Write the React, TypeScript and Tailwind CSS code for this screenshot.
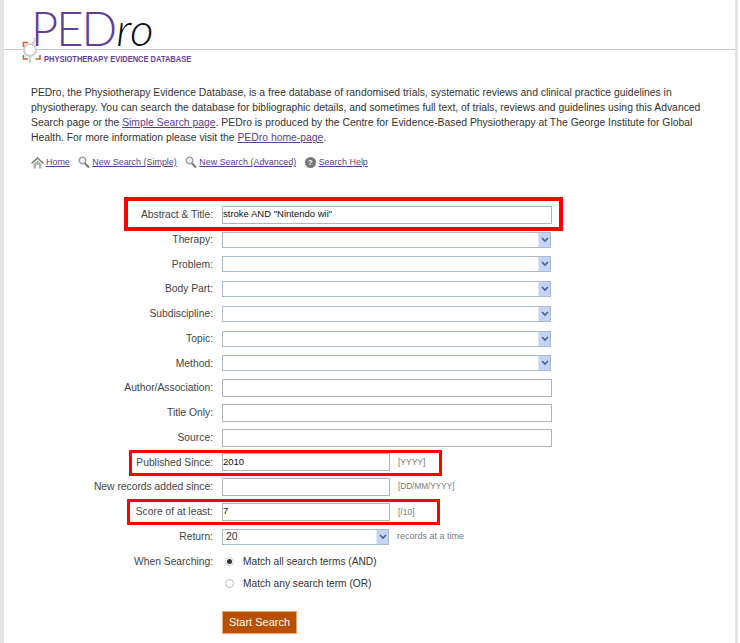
const selects = ["Therapy", "Problem", "Body Part", "Subdiscipline", "Topic", "Method"];
const texts = ["Author/Association", "Title Only", "Source"];

function Label({ children }: { children: React.ReactNode }) {
  return <div className="w-[214px] shrink-0 pr-[1px] text-right text-[10.300px] text-[#444]">{children}</div>;
}

function Chevron() {
  return (
    <span className="flex h-full w-[12px] items-center justify-center border-l border-[#dfe8f6] bg-[#c3d5f7]">
      <svg width="8" height="6" viewBox="0 0 8 6" fill="none" stroke="#4d6185" strokeWidth="1.6">
        <path d="M1 1l3 3 3-3" />
      </svg>
    </span>
  );
}

function Select({ value = "", width = "w-[329px]" }: { value?: string; width?: string }) {
  return (
    <div className={`ml-[8px] flex h-[16px] items-center justify-between border border-[#abbacb] bg-white pl-[3px] text-[#333] ${width}`}>
      <span>{value}</span>
      <Chevron />
    </div>
  );
}

function TextBox({ value = "", width = "w-[330px]" }: { value?: string; width?: string }) {
  return (
    <div className={`ml-[8px] flex h-[18px] items-center border border-[#b4b4b4] bg-white text-[9.5px] leading-none text-[#111] ${width}`}>
      <span className="-mt-[2px]">{value}</span>
    </div>
  );
}

function NavLink({ icon, children }: { icon: React.ReactNode; children: string }) {
  return (
    <span className="flex items-center gap-[2px]">
      {icon}
      <a className="text-[#5b3d8f] underline">{children}</a>
    </span>
  );
}

const Magnifier = (
  <svg width="12" height="13" viewBox="0 0 12 13" fill="none">
    <circle cx="4.500" cy="4.500" r="3.300" fill="#eef0f2" stroke="#9a9a9a" strokeWidth="1.300" />
    <path d="M7 7.500l4 4" stroke="#777" strokeWidth="2" />
  </svg>
);

export default function App() {
  return (
    <div className="relative h-[643px] w-[740px] overflow-hidden bg-white font-['Liberation_Sans',Arial,sans-serif] text-[10.5px] text-[#333]">
      {/* page frame */}
      <div className="h-full w-[738px] border-l-[4px] border-r-[3px] border-[#e4e4e4]">
        {/* logo */}
        <div className="relative h-[50px] border-b border-[#c9c9c9]">
          <div className="absolute left-[27px] top-[5px] flex items-baseline font-['Lato',sans-serif] leading-none">
            <span className="text-[47px] font-light tracking-[-2px] text-[#5f3f97]">PED</span>
            <span className="ml-[1px] text-[46px] font-light italic text-[#111]">ro</span>
          </div>
          <svg className="absolute left-[16px] top-[36px]" width="24" height="30" viewBox="0 0 24 30" fill="none">
            <circle cx="10" cy="14" r="6" fill="#fff" stroke="#cfcfcf" strokeWidth="2" />
            <path d="M12 8l3-3V2M10 20v7" stroke="#cfcfcf" strokeWidth="2" />
            <path d="M3.500 11V6.500H8M3.500 19v4H8M15.500 23H20v-4" stroke="#d0612a" strokeWidth="1.600" />
          </svg>
        </div>
        <div className="ml-[40px] mt-[4px] origin-left scale-x-[0.79] whitespace-nowrap text-[9.5px] font-bold leading-[10px] text-[#5f3f97]">PHYSIOTHERAPY EVIDENCE DATABASE</div>

        {/* intro */}
        <p className="ml-[27px] mt-[21px] w-[690px] text-[10.380px] leading-[15px] text-[#333]">
          PEDro, the Physiotherapy Evidence Database, is a free database of randomised trials, systematic reviews and clinical practice guidelines in physiotherapy. You can search the database for bibliographic details, and sometimes full text, of trials, reviews and guidelines using this Advanced Search page or the{" "}
          <a className="text-[#5b3d8f] underline">Simple Search page</a>. PEDro is produced by the Centre for Evidence-Based Physiotherapy at The George Institute for Global Health. For more information please visit the{" "}
          <a className="text-[#5b3d8f] underline">PEDro home-page</a>.
        </p>

        {/* nav */}
        <div className="ml-[27px] mt-[11px] flex h-[14px] items-center gap-[8.500px] text-[8.950px]">
          <NavLink
            icon={
              <svg width="13" height="13" viewBox="0 0 13 13">
                <path d="M0 7l6.500-6L13 7l-1 1-5.500-5L1 8z" fill="#777" />
                <path d="M2.500 8l4-3.500 4 3.500v4.500H8V9H5v3.500H2.500z" fill="#b4b4a8" />
              </svg>
            }
          >
            Home
          </NavLink>
          <NavLink icon={Magnifier}>New Search (Simple)</NavLink>
          <NavLink icon={Magnifier}>New Search (Advanced)</NavLink>
          <NavLink
            icon={
              <span className="mr-[1px] flex h-[11px] w-[11px] items-center justify-center rounded-full bg-[#777] text-[8px] font-bold leading-none text-white">?</span>
            }
          >
            Search Help
          </NavLink>
        </div>

        {/* form */}
        <div className="mt-[32.500px] -ml-[4px]">
          <div className="relative flex h-[24.750px] items-center">
            <Label>Abstract &amp; Title:</Label>
            <TextBox value={'stroke AND "Nintendo wii"'} />
            <div className="absolute left-[124px] top-[-5.500px] h-[34px] w-[439px] border-[4px] border-[#f00]" />
          </div>
          {selects.map((s) => (
            <div key={s} className="flex h-[24.750px] items-center">
              <Label>{s}:</Label>
              <Select />
            </div>
          ))}
          {texts.map((s) => (
            <div key={s} className="flex h-[24.750px] items-center">
              <Label>{s}:</Label>
              <TextBox />
            </div>
          ))}
          <div className="relative flex h-[24.750px] items-center">
            <Label>Published Since:</Label>
            <TextBox value="2010" width="w-[168px]" />
            <span className="ml-[8px] text-[8.500px] text-[#777]">[YYYY]</span>
            <div className="absolute left-[129px] top-[-0.500px] h-[26px] w-[313px] border-[3px] border-[#f00]" />
          </div>
          <div className="flex h-[24.750px] items-center">
            <Label>New records added since:</Label>
            <TextBox width="w-[168px]" />
            <span className="ml-[8px] text-[8.200px] text-[#777]">[DD/MM/YYYY]</span>
          </div>
          <div className="relative flex h-[24.750px] items-center">
            <Label>Score of at least:</Label>
            <TextBox value="7" width="w-[168px]" />
            <span className="ml-[8px] text-[8.500px] text-[#777]">[/10]</span>
            <div className="absolute left-[127px] top-[-0.500px] h-[26px] w-[313px] border-[3px] border-[#f00]" />
          </div>
          <div className="flex h-[24.750px] items-center">
            <Label>Return:</Label>
            <Select value="20" width="w-[167px]" />
            <span className="ml-[8px] text-[9px] text-[#777]">records at a time</span>
          </div>
          <div className="flex h-[24.750px] items-center">
            <Label>When Searching:</Label>
            <span className="ml-[11px] flex h-[9px] w-[9px] items-center justify-center rounded-full border border-[#ccc] bg-white">
              <span className="h-[5px] w-[5px] rounded-full bg-[#333]" />
            </span>
            <span className="ml-[9px] text-[10.200px]">Match all search terms (AND)</span>
          </div>
          <div className="flex h-[20px] items-center">
            <div className="w-[214px] shrink-0" />
            <span className="ml-[11px] h-[9px] w-[9px] rounded-full border border-[#bbb] bg-white" />
            <span className="ml-[9px] text-[10.200px]">Match any search term (OR)</span>
          </div>
          <div className="ml-[222px] mt-[17px] flex h-[23px] w-[75px] items-center justify-center border border-[#e9a27a] bg-[#b94f00] text-[11px] text-[#fff]">
            Start Search
          </div>
        </div>
      </div>
    </div>
  );
}
